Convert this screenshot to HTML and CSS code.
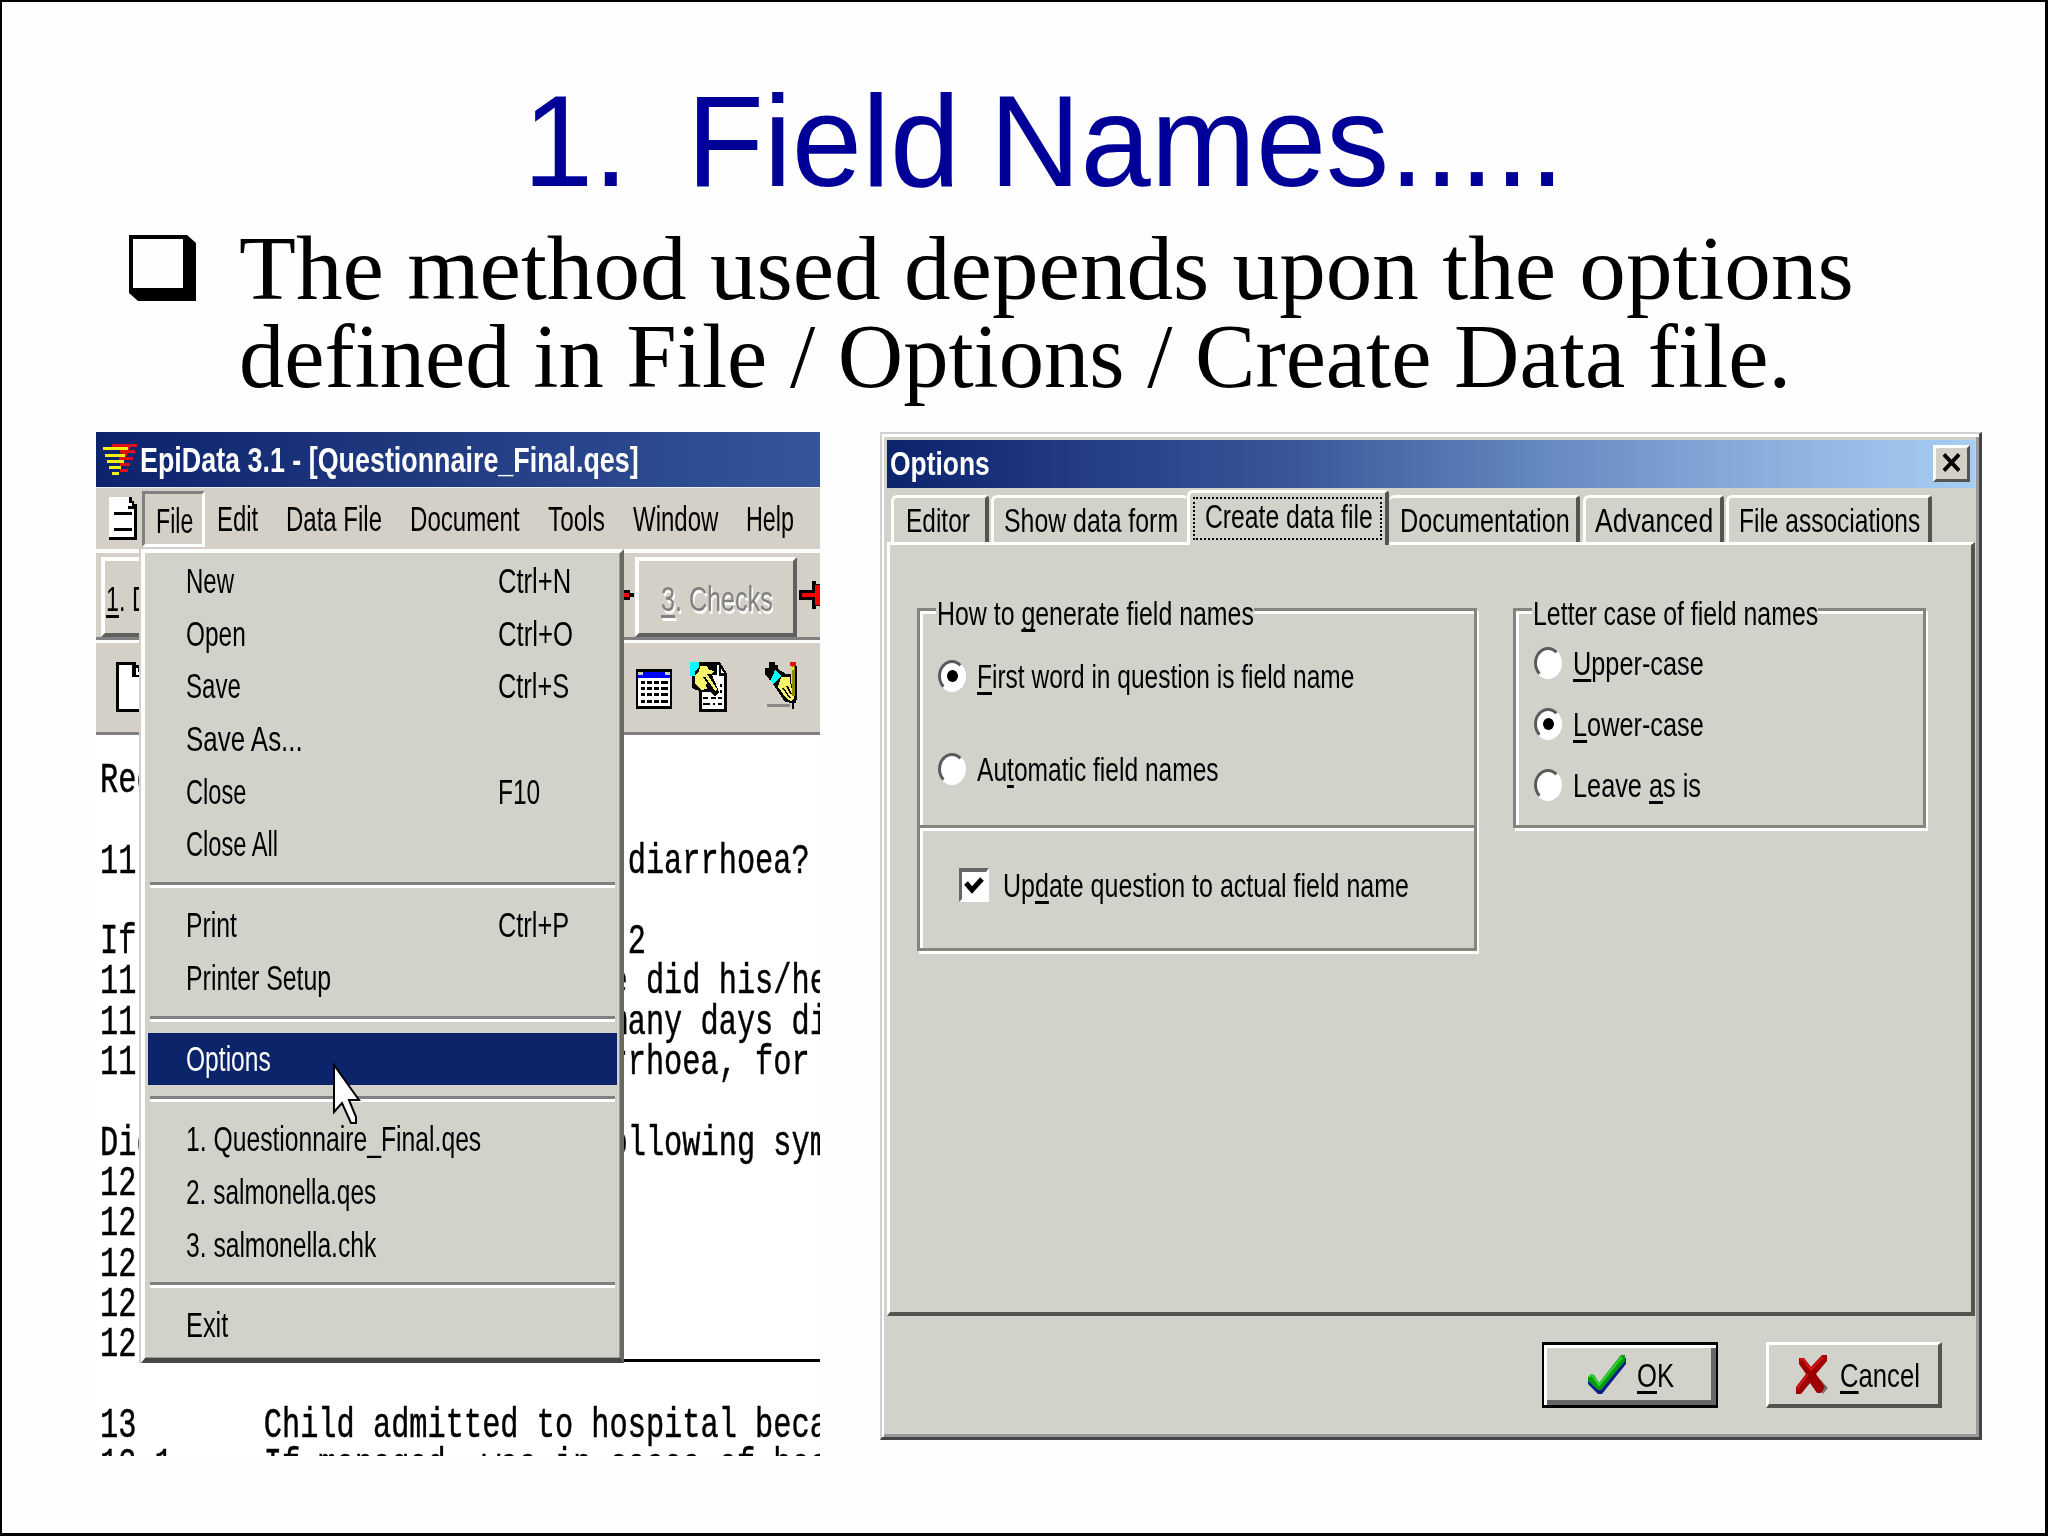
FILE: index.html
```html
<!DOCTYPE html>
<html lang="en">
<head>
<meta charset="utf-8">
<title>Field Names</title>
<link rel="stylesheet" href="styles.css">
</head>
<body>
<main class="slide">
  <h1 class="title"><span class="fit" data-w="1042">1.  Field Names.....</span></h1>
  <div class="point">
    <svg class="bullet" viewBox="0 0 67 66"><path fill-rule="evenodd" d="M0 0H58L67 8V66H9L0 58ZM4 4V53H54V4Z"/></svg>
    <p class="point-text"><span class="fit" data-w="1615">The method used depends upon the options</span><br><span class="fit" data-w="1552">defined in File / Options / Create Data file.</span></p>
  </div>
  <div class="shots">
    <section class="editor">
      <div class="editor-title">
        <svg class="app-icon" viewBox="69 71 103 96" shape-rendering="crispEdges">
          <g fill="#e01018"><path d="M97 72h74v9H97zM120 90h46v9h-46zM118 109h42v9h-42zM120 128h30v9h-30zM122 147h22v9h-22z"/><path d="M130 80h22l-22 50h-6z"/></g>
          <g fill="#f4f010"><path d="M69 81h76v9H69zM75 100h60v9H75zM82 119h50v9H82zM88 138h36v9H88zM96 156h21v9H96z"/></g>
        </svg>
        <span class="fit" data-w="499">EpiData 3.1 - [Questionnaire_Final.qes]</span>
      </div>
      <nav class="menubar">
        <svg class="doc-icon" viewBox="0 0 28 44" shape-rendering="crispEdges"><path fill="#fff" d="M0 0h20l7 9v32H0z"/><path d="M20 0h3v4h2v3h3v36H0v-3h25V12h-6V9h4V6h-3zM5 15h18v3H5zM5 31h18v3H5z"/></svg>
        <span class="menu-name open"><span class="fit" data-w="37">File</span></span>
        <span class="menu-name"><span class="fit" data-w="41">Edit</span></span>
        <span class="menu-name"><span class="fit" data-w="96">Data File</span></span>
        <span class="menu-name"><span class="fit" data-w="110">Document</span></span>
        <span class="menu-name"><span class="fit" data-w="57">Tools</span></span>
        <span class="menu-name"><span class="fit" data-w="85">Window</span></span>
        <span class="menu-name"><span class="fit" data-w="48">Help</span></span>
      </nav>
      <div class="steps">
        <div class="step first"><span class="fit" data-w="62"><u>1</u>. Def</span></div>
        <svg class="arrow-tip" viewBox="0 0 12 12" shape-rendering="crispEdges"><path d="M0 0h7v3h4v4H7v3H0z"/><path fill="#f00" d="M0 3h6v4H0z"/></svg>
        <div class="step checks"><span class="fit" data-w="112"><u>3</u>. Checks</span></div>
        <svg class="arrow" viewBox="0 0 21 28" shape-rendering="crispEdges"><path d="M0 9h13V0h4v3h4v22h-4v3h-4v-9H0z"/><path fill="#f00" d="M3 12h13V4h5v20h-5v-8H3z"/></svg>
      </div>
      <div class="tools">
        <svg class="page-icon" viewBox="0 0 28 50" shape-rendering="crispEdges"><path d="M0 0h20v3h3v4h5v43H0z"/><path fill="#fff" d="M3 3h13v12h12v32H3zM20 6h2v4h4v3h-6z"/></svg>
        <svg class="tool-grid" viewBox="0 0 36 40" shape-rendering="crispEdges"><path d="M0 0h36v40H0z"/><path fill="#fff" d="M2 9h32v28H2z"/><path fill="#00f" d="M2 3h32v6H2z"/><path fill="#ccc" d="M2 3h5v3H2zM29 3h5v3h-5z"/><path d="M5 12h4v3H5zM11 12h5v3h-5zM18 12h5v3h-5zM25 12h7v3h-7zM5 18h4v3H5zM11 18h5v3h-5zM18 18h5v3h-5zM25 18h7v3h-7zM5 24h4v3H5zM11 24h5v3h-5zM18 24h5v3h-5zM25 24h7v3h-7zM5 31h4v3H5zM11 31h5v3h-5zM18 31h5v3h-5zM25 31h7v3h-7z"/></svg>
        <svg class="tool-hand" viewBox="0 0 37 50" shape-rendering="crispEdges"><path d="M8 0h22l7 12v38H9V29L2 26V12z"/><path fill="#fff" d="M12 30h8l5 4 4-4-4-10-3-7h5V3h2v11h5v33H12z"/><path fill="#fff" d="M31 6l3 5h-3z"/><path fill="#0ff" d="M0 0h9v5L5 9v5H0z"/><path fill="#f7f36b" d="M10 4h7l2 4 5 1-2 3h-5l10 15-2 2-6-8-3 1 1 5-6 1-6-6V13l4-3z"/><path stroke="#000" stroke-width="2" d="M14 15l10 14M13 36h5M21 36h5M28 36h4M13 42h7M23 42h2M28 42h4M31 22v3M31 28v3"/></svg>
        <svg class="tool-pen" viewBox="0 0 32 47" shape-rendering="crispEdges"><path d="M4 0h6v3h3v4l8 5h5v8l5 18v3h-4l-7-1-8-12-4-6L0 12V6h4z"/><path fill="#0ff" d="M10 8l4 4 2 2-8 8-3-3 3-6z"/><path fill="#f7f36b" d="M16 15h9v5l4 16-3 3-5-3-8-11z"/><path stroke="#000" stroke-width="1.5" d="M18 26l7 10M22 24l4 8"/><path fill="#8e8a00" d="M27 3h3v31h-3z"/><path fill="#e01010" d="M25 0h6v4h-6z"/><path fill="#f5e800" d="M26 5h3v3h-3z"/><path d="M30 4h2v34h-3v9h-2v-9h3z"/><path fill="#888" d="M2 42h23v3H2z"/></svg>
      </div>
      <pre class="code">Rec

11                           diarrhoea?

If                           2
11                          e did his/her
11                          many days did
11                          rrhoea, for

Did                         ollowing symp
12
12
12
12
12

13       Child admitted to hospital becau
13.1     If managed, was in cases of hosp</pre>
      <div class="rule"></div>
      <div class="dropdown">
        <div class="item"><span class="fit" data-w="48">New</span><b class="key"><span class="fit" data-w="73">Ctrl+N</span></b></div>
        <div class="item"><span class="fit" data-w="60">Open</span><b class="key"><span class="fit" data-w="75">Ctrl+O</span></b></div>
        <div class="item"><span class="fit" data-w="55">Save</span><b class="key"><span class="fit" data-w="71">Ctrl+S</span></b></div>
        <div class="item"><span class="fit" data-w="117">Save As...</span></div>
        <div class="item"><span class="fit" data-w="60">Close</span><b class="key"><span class="fit" data-w="42">F10</span></b></div>
        <div class="item"><span class="fit" data-w="92">Close All</span></div>
        <div class="sep"></div>
        <div class="item"><span class="fit" data-w="51">Print</span><b class="key"><span class="fit" data-w="71">Ctrl+P</span></b></div>
        <div class="item"><span class="fit" data-w="145">Printer Setup</span></div>
        <div class="sep"></div>
        <div class="item active"><span class="fit" data-w="85">Options</span></div>
        <div class="sep"></div>
        <div class="item"><span class="fit" data-w="295">1. Questionnaire_Final.qes</span></div>
        <div class="item"><span class="fit" data-w="190">2. salmonella.qes</span></div>
        <div class="item"><span class="fit" data-w="190">3. salmonella.chk</span></div>
        <div class="sep"></div>
        <div class="item"><span class="fit" data-w="42">Exit</span></div>
      </div>
      <svg class="pointer" viewBox="0 0 28 64"><path fill="#fff" stroke="#000" stroke-width="2" d="M1 3V50L9 41L18 61H23V55L16 38H26Z"/></svg>
    </section>

    <section class="dialog">
      <div class="dialog-title">
        <span class="fit" data-w="100">Options</span>
        <span class="close"><svg viewBox="0 0 20 19"><path stroke="#000" stroke-width="4" d="M2 1L18 18M18 1L2 18"/></svg></span>
      </div>
      <div class="tabs">
        <span class="tab editor-tab"><span class="fit" data-w="64">Editor</span></span>
        <span class="tab show-tab"><span class="fit" data-w="174">Show data form</span></span>
        <span class="tab current"><span class="focus"><span class="fit" data-w="168">Create data file</span></span></span>
        <span class="tab documentation-tab"><span class="fit" data-w="170">Documentation</span></span>
        <span class="tab advanced-tab"><span class="fit" data-w="118">Advanced</span></span>
        <span class="tab files-tab"><span class="fit" data-w="181">File associations</span></span>
      </div>
      <div class="panel">
        <div class="left-groups">
          <div class="group generate">
            <span class="legend"><span class="fit" data-w="317">How to <u>g</u>enerate field names</span></span>
            <div class="choice"><i class="radio on"></i><span class="fit" data-w="377"><u>F</u>irst word in question is field name</span></div>
            <div class="choice"><i class="radio"></i><span class="fit" data-w="242">Au<u>t</u>omatic field names</span></div>
          </div>
          <div class="group update">
            <div class="choice"><i class="box"><svg viewBox="0 0 18 20"><path fill="none" stroke="#000" stroke-width="5" d="M1 7L7 14L17 3"/></svg></i><span class="fit" data-w="406">Up<u>d</u>ate question to actual field name</span></div>
          </div>
        </div>
        <div class="group case">
          <span class="legend"><span class="fit" data-w="285">Letter case of field names</span></span>
          <div class="choice"><i class="radio"></i><span class="fit" data-w="131"><u>U</u>pper-case</span></div>
          <div class="choice"><i class="radio on"></i><span class="fit" data-w="131"><u>L</u>ower-case</span></div>
          <div class="choice"><i class="radio"></i><span class="fit" data-w="128">Leave <u>a</u>s is</span></div>
        </div>
      </div>
      <div class="buttons">
        <span class="button ok"><svg class="tick" viewBox="0 0 38 40"><path fill="#0a1c8c" d="M0 24l5-1 7 9L35 3l3 0v6L14 39h-4L0 29z"/><path fill="#0a9a10" d="M0 22l3-3 3 1 5 8L33 0h4v6L13 35h-3L0 26z"/><path fill="none" stroke="#2fd62f" stroke-width="2" d="M1 22l3-2 7 10L34 2"/></svg><span class="fit" data-w="37"><u>O</u>K</span></span>
        <span class="button cancel"><svg class="cross" viewBox="0 0 32 40"><path fill="#777" d="M24 24l8 9-5 6-8-9z"/><path fill="#9c0000" d="M3 3h5l7 9L26 0h5v6L20 19l9 13-4 6h-4l-7-10L5 39H0v-7l10-13L3 9z"/><path fill="none" stroke="#d81414" stroke-width="2" d="M4 5l3-1 8 11L27 2M1 34L12 19"/></svg><span class="fit" data-w="80"><u>C</u>ancel</span></span>
      </div>
    </section>
  </div>
</main>
<script src="fit.js"></script>
</body>
</html>
```
FILE: styles.css
```css
* { box-sizing: border-box; }
body { margin: 0; background: #fff; }
svg { display: block; flex: none; overflow: visible; }
u { text-decoration-thickness: 3px; text-underline-offset: 4px; text-decoration-skip-ink: none; }
.fit { display: inline-block; transform-origin: 0 50%; white-space: pre; flex: none; }

.slide {
  width: 2048px; height: 1536px; overflow: hidden; padding-top: 65px;
  border: 3px solid #000; border-width: 2px 3px 3px 2px; background: #fefefe;
  font: 35px/40px "Liberation Sans", Arial, sans-serif; color: #000;
}
.title { margin: 0 0 0 521px; height: 145px; font-size: 129px; line-height: 149px; font-weight: 400; color: #009; word-spacing: -6px; }
.point { display: flex; height: 218px; margin-left: 127px; padding-top: 13px; }
.bullet { width: 67px; height: 66px; margin-top: 10px; }
.point-text { margin: 0 0 0 43px; font: 90px/88px "Liberation Serif", "Times New Roman", serif; white-space: nowrap; }
.shots { display: flex; gap: 60px; margin-left: 94px; padding-top: 2px; }

/* Editor window */
.editor { position: relative; width: 724px; height: 1024px; overflow: hidden; background: #fff; flex: none; }
.editor-title {
  display: flex; align-items: center; height: 55px; padding-left: 7px; gap: 3px;
  background: linear-gradient(90deg, #0c236d, #203a80 45%, #35559b); color: #fff; font-weight: 700; font-size: 35px;
}
.app-icon { width: 34px; height: 32px; }
.menubar { display: flex; height: 62px; background: #d4d0c8; padding-top: 3px; border-top: 1px solid #eee; }
.doc-icon { width: 28px; height: 44px; margin: 6px 5px 0 13px; }
.menu-name { padding: 8px 14px 0 13px; margin-right: 0; }
.menu-name.open { width: 63px; height: 56px; padding: 7px 11px; margin-right: -1px; border: 3px solid #fff; border-top-color: #808080; border-left-color: #808080; }
.menu-name:nth-child(n+4) { padding-left: 14px; }
.steps { display: flex; height: 94px; background: #d4d0c8; border-top: 4px solid #fff; border-bottom: 3px solid #fff; padding: 4px 0 0 5px; box-shadow: inset 0 -3px #808080; }
.step { height: 80px; padding-top: 18px; border: 4px solid #fff; border-right-color: #606060; border-bottom-color: #606060; flex: none; }
.first { width: 90px; padding-left: 1px; }
.arrow-tip { width: 12px; height: 12px; margin: 33px 0 0 432px; }
.checks { width: 162px; margin-left: 0; padding-left: 22px; color: #808080; text-shadow: 2px 3px #fff; }
.arrow { width: 21px; height: 28px; margin: 24px 0 0 2px; }
.tools { display: flex; height: 92px; padding: 19px 0 0 20px; background: #d4d0c8; border-bottom: 3px solid #808080; }
.page-icon { width: 28px; height: 50px; }
.tool-grid { width: 36px; height: 40px; margin: 7px 0 0 492px; }
.tool-hand { width: 37px; height: 50px; margin-left: 18px; }
.tool-pen { width: 32px; height: 47px; margin-left: 38px; }
.code {
  margin: 26px 0 0 4px; width: 1100px; transform: scaleX(.722); transform-origin: 0 0;
  font: 42px/40.3px "Liberation Mono", "Courier New", monospace; -webkit-text-stroke: .5px #000;
}
.rule { position: absolute; left: 528px; top: 927px; width: 196px; height: 3px; background: #000; }
.dropdown {
  position: absolute; left: 45px; top: 117px; width: 483px; height: 814px; padding: 2px 3px 0 3px;
  background: #d2d1ca; border: 4px solid #fff; border-right: 4px solid #6a6862; border-bottom: 5px solid #484642;
  box-shadow: inset -1px -1px #999, -2px 0 #d4d0c8;
}
.item { display: flex; height: 52.7px; padding: 6px 0 0 38px; position: relative; }
.key { position: absolute; left: 350px; font-weight: 400; }
.active { background: #0b246a; color: #fff; }
.sep { height: 6px; margin: 11px 2px 11px 2px; border-top: 3px solid #808080; border-bottom: 3px solid #fff; }
.pointer { position: absolute; left: 237px; top: 630px; width: 28px; height: 64px; }

/* Options dialog */
.dialog {
  width: 1102px; height: 1008px; padding: 4px 4px 0 3px; font-size: 34px; background: #d2d1ca; flex: none;
  border: 2px solid #d0d0d0; border-right: 3px solid #444; border-bottom: 3px solid #444;
  box-shadow: inset 2px 3px #fff, inset -3px -3px #999;
}
.dialog-title {
  display: flex; align-items: center; justify-content: space-between; height: 48px; padding: 0 5px 0 3px; margin: 2px 0 0 2px;
  background: linear-gradient(90deg, #0c236d, #253f88 20%, #3a589b 38%, #6488c0 60%, #8aaedb 80%, #a8cdf3);
  color: #fff; font-weight: 700; font-size: 33px;
}
.close { width: 37px; height: 37px; padding: 5px 6px; background: #d4d0c8; border: 3px solid #fff; border-right-color: #555; border-bottom-color: #555; margin-bottom: 1px; }
.close svg { width: 19px; height: 19px; }
.tabs { display: flex; align-items: flex-end; height: 54px; padding-left: 6px; }
.tab { height: 47px; padding: 2px 0 0 12px; border: 3px solid #fffff8; border-bottom: 0; border-right: 4px solid #55544f; border-radius: 6px 4px 0 0; flex: none; }
.editor-tab { width: 98px; margin-right: 2px; }
.show-tab { width: 196px; border-right: 0; padding-left: 10px; }
.current { width: 202px; height: 55px; margin-bottom: -3px; padding: 4px 3px; background: #d2d1ca; position: relative; }
.focus { display: block; height: 43px; padding: 0 0 0 10px; border: 2px dotted #000; line-height: 34px; }
.documentation-tab { width: 191px; margin-right: 3px; padding-left: 11px; border-left: 0; }
.advanced-tab { width: 141px; margin-right: 2px; padding-left: 9px; }
.files-tab { width: 206px; padding-left: 10px; }
.panel {
  display: flex; gap: 36px; align-items: flex-start; height: 774px; padding: 63px 0 0 27px; margin-left: 2px;
  border: 3px solid #fff; border-right: 4px solid #55544f; border-bottom: 4px solid #55544f;
}
.group { position: relative; border: 3px solid #85847f; box-shadow: inset 3px 3px #fff, 2px 3px #fff; }
.generate { width: 560px; height: 220px; padding: 45px 0 0 18px; }
.update { width: 560px; height: 123px; padding: 37px 0 0 39px; border-top: 0; }
.case { width: 413px; height: 220px; padding: 32px 0 0 18px; }
.legend { position: absolute; left: 16px; top: -18px; background: #d2d1ca; height: 36px; line-height: 40px; padding-left: 1px; }
.choice { display: flex; align-items: center; height: 40px; }
.generate .choice + .choice { margin-top: 53px; }
.case .choice + .choice { margin-top: 21px; }
.radio { width: 28px; height: 32px; margin-right: 11px; border-radius: 50%; background: #fff; border: 3px solid #fff; border-top-color: #5a5a5a; border-left-color: #5a5a5a; display: grid; place-items: center; flex: none; }
.on::after { content: ""; width: 11px; height: 12px; border-radius: 50%; background: #000; }
.box { width: 30px; height: 34px; margin-right: 14px; padding: 4px 3px; background: #fff; border: 3px solid #fff; border-top: 4px solid #666; border-left-color: #666; flex: none; }
.box svg { width: 18px; height: 20px; }
.buttons { display: flex; gap: 48px; padding: 26px 0 0 657px; }
.button { display: flex; width: 176px; height: 66px; align-items: center; border: 3px solid #fff; border-right: 4px solid #55544f; border-bottom: 4px solid #55544f; }
.ok { border: 2px solid #000; border-width: 3px 2px; box-shadow: inset 3px 3px #fff, inset -5px -5px #666; padding-left: 44px; }
.tick { width: 38px; height: 40px; margin-right: 11px; }
.cancel { padding-left: 27px; }
.cross { width: 32px; height: 40px; margin-right: 12px; }
```
FILE: fit.js
```js
// Condense each label to the width given in its data-w attribute.
for (const el of document.querySelectorAll('.fit')) {
  const target = Number(el.dataset.w);
  const natural = el.offsetWidth;
  el.style.transform = `scaleX(${target / natural})`;
  el.style.marginRight = `${target - natural}px`;
}
```
